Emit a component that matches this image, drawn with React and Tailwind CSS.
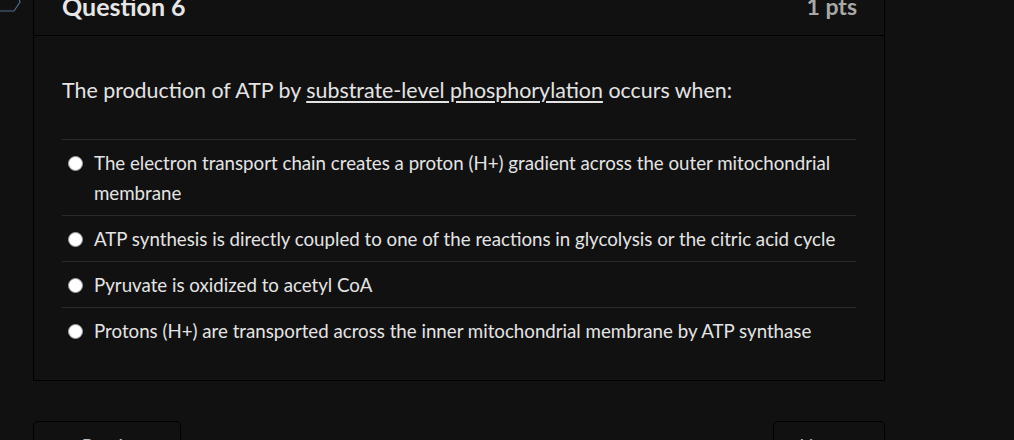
export default function App() {
  const options = [
    "The electron transport chain creates a proton (H+) gradient across the outer mitochondrial membrane",
    "ATP synthesis is directly coupled to one of the reactions in glycolysis or the citric acid cycle",
    "Pyruvate is oxidized to acetyl CoA",
    "Protons (H+) are transported across the inner mitochondrial membrane by ATP synthase",
  ];
  return (
    <div
      className="relative w-[1014px] h-[440px] overflow-hidden bg-[#111111] text-[#e4e4e4]"
      style={{ fontFamily: "Lato, 'Open Sans', sans-serif" }}
    >
      <svg className="absolute left-0 top-0" width="24" height="14" viewBox="0 0 24 14">
        <polyline points="0,11 14,11 20,2 18,-4" fill="none" stroke="#4f6f8f" strokeWidth="1.2" />
      </svg>
      <div className="ml-[33px] w-[852px] -mt-[15px]">
        <div className="border border-black">
          <div className="h-[50px] border-b border-black flex items-center justify-between pl-[28px] pr-[27px] pb-[8px]">
            <span className="text-[25px] font-bold text-[#e6e6e6] leading-none">Question 6</span>
            <span className="text-[23px] font-bold text-[#a8a8a8] leading-none">1 pts</span>
          </div>
          <div className="px-[28px] pt-[39px] pb-[27px]">
            <p className="text-[21.4px] leading-[30px] mb-[34px]">
              The production of ATP by{" "}
              <span className="underline underline-offset-[3px]">substrate-level phosphorylation</span>{" "}
              occurs when:
            </p>
            {options.map((o, i) => (
              <div key={i} className="flex items-start border-t border-[#2a2a2a] pt-[8px] pb-[7px]">
                <span className="mt-[8px] ml-[6px] w-[15px] h-[15px] shrink-0 rounded-full bg-white border border-[#9a9a9a]"></span>
                <span className="ml-[11px] text-[18.7px] leading-[30px] pr-[10px]">{o}</span>
              </div>
            ))}
          </div>
        </div>
        <div className="mt-[40px] flex justify-between">
          <div className="w-[148px] h-[40px] rounded-[5px] border border-black flex items-start justify-center pt-[9px] text-[18.7px] leading-[30px] text-[#bdbdbd]">
            ◀ Previous
          </div>
          <div className="w-[112px] h-[40px] rounded-[5px] border border-black flex items-start justify-center pt-[9px] text-[18.7px] leading-[30px] text-[#bdbdbd]">
            Next ▶
          </div>
        </div>
      </div>
    </div>
  );
}
